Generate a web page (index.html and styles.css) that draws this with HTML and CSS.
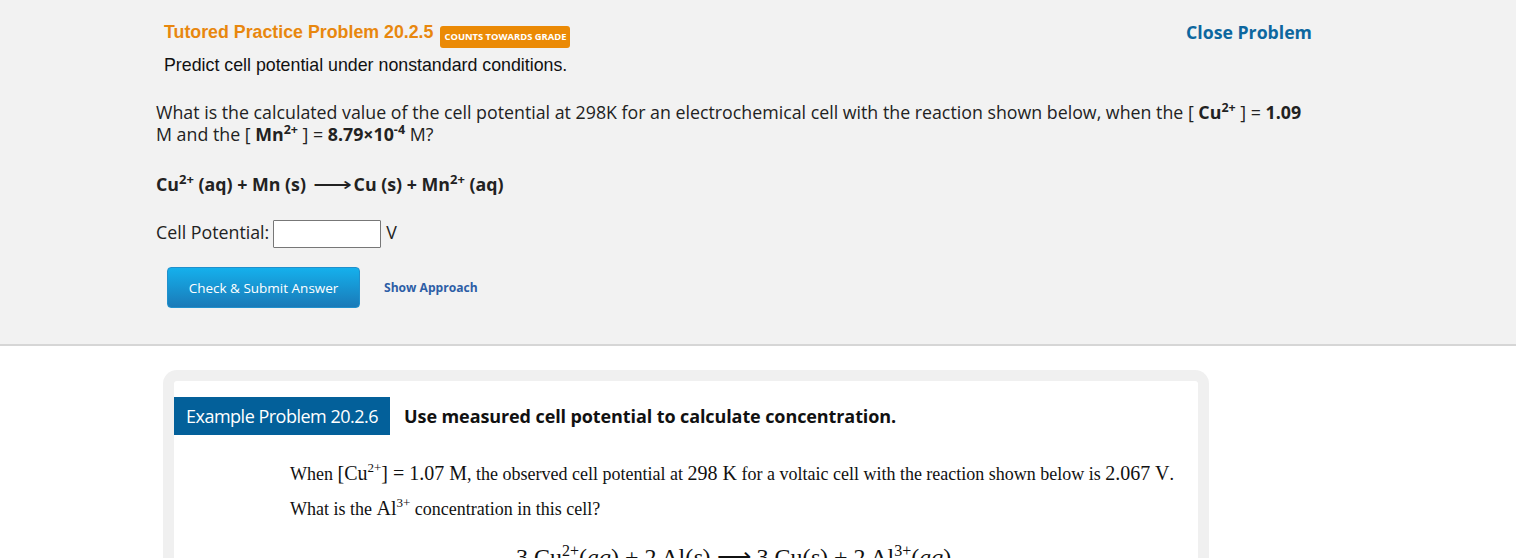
FILE: index.html
```html
<!DOCTYPE html>
<html>
<head>
<meta charset="utf-8">
<link rel="stylesheet" href="styles.css">
</head>
<body>
<section class="top">
  <div class="inner">
    <header class="head">
      <div class="head-left">
        <h1 class="title">Tutored Practice Problem 20.2.5 <span class="badge">COUNTS TOWARDS GRADE</span></h1>
        <p class="subtitle">Predict cell potential under nonstandard conditions.</p>
      </div>
      <a class="close">Close Problem</a>
    </header>
    <p class="question">What is the calculated value of the cell potential at 298K for an electrochemical cell with the reaction shown below, when the [ <b>Cu<sup>2+</sup></b> ] = <b>1.09</b> M and the [ <b>Mn<sup>2+</sup></b> ] = <b>8.79×10<sup>-4</sup></b> M?</p>
    <p class="reaction"><b>Cu<sup>2+</sup> (aq) + Mn (s) <span class="arrow">⟶</span>Cu (s) + Mn<sup>2+</sup> (aq)</b></p>
    <div class="answer">
      <label class="lbl">Cell Potential:</label>
      <span class="box"></span>
      <span class="unit">V</span>
    </div>
    <div class="actions">
      <button class="submit">Check &amp; Submit Answer</button>
      <a class="approach">Show Approach</a>
    </div>
  </div>
</section>
<section class="example">
  <div class="card">
    <div class="card-head">
      <span class="tag">Example Problem 20.2.6</span>
      <span class="card-title">Use measured cell potential to calculate concentration.</span>
    </div>
    <div class="math">
      <p class="mline">When <span class="m">[Cu<sup>2+</sup>] = 1.07 M</span>, the observed cell potential at <span class="m">298 K</span> for a voltaic cell with the reaction shown below is <span class="m">2.067 V</span>.</p>
      <p class="mline">What is the <span class="m">Al<sup>3+</sup></span> concentration in this cell?</p>
      <p class="meq">3 Cu<sup>2+</sup>(<i>aq</i>) + 2 Al(<i>s</i>) ⟶ 3 Cu(<i>s</i>) + 2 Al<sup>3+</sup>(<i>aq</i>)</p>
    </div>
  </div>
</section>
</body>
</html>
```
FILE: styles.css
```css
html, body { margin: 0; padding: 0; background: #fff; }
body { font-family: "Open Sans", sans-serif; color: #222; overflow: hidden; height: 558px; }
p { margin: 0; }
.top { background: #f2f2f2; border-bottom: 2px solid #d6d6d6; height: 346px; box-sizing: border-box; }
.inner { margin-left: 156px; width: 1164px; padding-top: 20px; }
.head { display: flex; justify-content: space-between; align-items: flex-start; padding: 0 8px; }
.title { margin: 0; font-family: "Liberation Sans", Arial, sans-serif; font-size: 17.8px; font-weight: bold; color: #e8870e; line-height: 24px; height: 24px; display: flex; align-items: flex-start; }
.badge { display: inline-block; margin-left: 7px; margin-top: 6px; margin-bottom: -6px; background: #eb8a05; color: #fff; font-family: "Open Sans", sans-serif; font-size: 9.4px; font-weight: bold; line-height: 22px; padding: 0 4px; border-radius: 3px; }
.subtitle { font-family: "Liberation Sans", Arial, sans-serif; font-size: 17.8px; color: #111; margin-top: 11px; line-height: 21px; }
.close { font-size: 17.7px; font-weight: bold; color: #0d679f; line-height: 24px; margin-top: 0; }
.question { font-size: 17.8px; line-height: 22px; margin-top: 25px; color: #222; width: 1160px; }
.question sup { font-size: 12.5px; line-height: 0; }
.reaction { font-size: 17.8px; line-height: 22px; margin-top: 28px; color: #222; }
.reaction sup { font-size: 13px; line-height: 0; }
.arrow { font-weight: normal; font-size: 17px; display: inline-block; transform: scaleX(1.6); margin: 0 10px 0 9px; }
.answer { display: flex; align-items: center; margin-top: 24px; font-size: 17.8px; }
.lbl { color: #222; margin-bottom: 4px; }
.box { display: inline-block; width: 106px; height: 26px; background: #fff; border: 1px solid #777; margin-left: 4px; border-radius: 1px; }
.unit { margin-left: 5px; color: #222; margin-bottom: 4px; }
.actions { display: flex; align-items: center; margin-top: 19px; margin-left: 11px; }
.submit { width: 193px; height: 41px; border: 1px solid #2190cc; border-radius: 4px; background: linear-gradient(#15b0ec, #1a7ab8); color: #fff; font-family: "Open Sans", sans-serif; font-size: 13.5px; padding: 0; }
.approach { margin-left: 24px; font-size: 12.1px; font-weight: bold; color: #2d5ea6; }
.example { padding-top: 24px; }
.card { margin-left: 163px; width: 1024px; border: 11px solid #f0f0f0; border-bottom: 0; border-radius: 14px 14px 0 0; background: #fff; height: 300px; }
.card-head { display: flex; align-items: center; margin-top: 16px; }
.tag { background: #03609a; color: #fff; font-size: 18px; line-height: 38px; padding: 0 12px 0 12px; letter-spacing: -0.5px; }
.card-title { margin-left: 14px; font-size: 18px; font-weight: bold; color: #111; letter-spacing: -0.1px; }
.math { padding-left: 116px; padding-top: 21px; font-family: "Liberation Serif", "Times New Roman", serif; font-size: 18px; color: #111; }
.mline { line-height: 34px; }
.m { font-size: 20px; }
.m sup, .mline sup { font-size: 13px; line-height: 0; }
.meq { margin-top: 16px; padding-left: 226px; font-size: 24px; line-height: 30px; }
.meq sup { font-size: 16px; line-height: 0; }
```
